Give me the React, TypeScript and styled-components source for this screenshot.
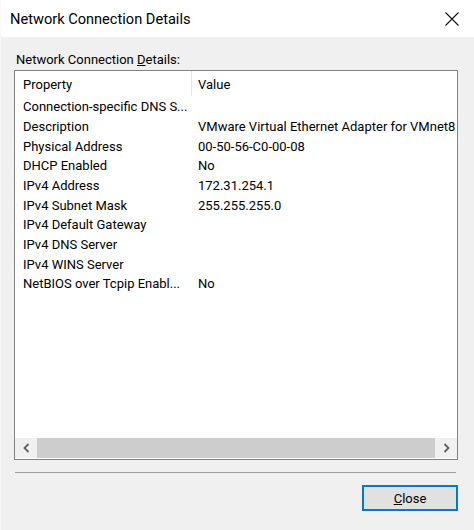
import React from "react";
import styled, { createGlobalStyle } from "styled-components";

const font = `Roboto, "Liberation Sans", Arial, sans-serif`;

const GlobalStyle = createGlobalStyle`
  html, body {
    margin: 0;
    padding: 0;
    background: #f0f0f0;
  }
  * {
    box-sizing: border-box;
  }
`;

const Window = styled.div`
  display: flex;
  flex-direction: column;
  width: 474px;
  height: 530px;
  overflow: hidden;

  font-family: ${font};
  font-size: 13px;
  color: #000;
  background: #f0f0f0;
  border-left: 1px solid #f8f8f8;
`;

const TitleBar = styled.div`
  display: flex;
  align-items: center;
  justify-content: space-between;
  flex: 0 0 37px;
  padding: 1px 15px 0 9px;

  background: #fff;
`;

const Title = styled.span`
  font-size: 14.6px;
  line-height: 20px;
`;

const Body = styled.div`
  display: flex;
  flex-direction: column;
  flex: 1;
  padding: 13px 16px 0 13px;
`;

const Label = styled.div`
  height: 20px;
  padding-left: 2px;
  line-height: 19px;
`;

const List = styled.div`
  display: flex;
  flex-direction: column;
  height: 390px;
  overflow: hidden;

  background: #fff;
  border: 1px solid #828282;
`;

const Header = styled.div`
  display: flex;
  flex: 0 0 25px;
`;

const HeaderCell = styled.div<{ $width?: number }>`
  display: flex;
  align-items: center;
  flex: ${(p) => (p.$width ? `0 0 ${p.$width}px` : "1")};
  padding: 2px 0 0 ${(p) => (p.$width ? 8 : 6)}px;

  border-right: ${(p) => (p.$width ? "1px solid #e5e5e5" : "none")};
`;

const Rows = styled.div`
  flex: 1;
  overflow: hidden;
`;

const Row = styled.div`
  display: flex;
  align-items: center;
  height: 19.67px;
  padding-top: 2px;
  white-space: nowrap;
`;

const PropCell = styled.div`
  flex: 0 0 177px;
  padding-left: 8px;
  overflow: hidden;
`;

const ValueCell = styled.div`
  flex: 1;
  padding-left: 6px;
  overflow: hidden;
`;

const ScrollBar = styled.div`
  display: flex;
  flex: 0 0 20px;
  margin-bottom: 1px;

  background: #f0f0f0;
`;

const ArrowBox = styled.div`
  display: flex;
  align-items: center;
  justify-content: center;
  flex: 0 0 22px;
`;

const Thumb = styled.div`
  flex: 1;
  background: #cdcdcd;
`;

const Separator = styled.div`
  height: 1px;
  margin: 12px 2px 0 1px;

  background: #a0a0a0;
`;

const ButtonRow = styled.div`
  display: flex;
  justify-content: flex-end;
  padding-top: 12px;
`;

const Button = styled.button`
  width: 96px;
  height: 26px;
  padding: 0;

  font-family: ${font};
  font-size: 13px;
  color: #000;

  background: #e1e1e1;
  border: 2px solid #0078d7;
`;

const rows: [string, string][] = [
  ["Connection-specific DNS S...", ""],
  ["Description", "VMware Virtual Ethernet Adapter for VMnet8"],
  ["Physical Address", "00-50-56-C0-00-08"],
  ["DHCP Enabled", "No"],
  ["IPv4 Address", "172.31.254.1"],
  ["IPv4 Subnet Mask", "255.255.255.0"],
  ["IPv4 Default Gateway", ""],
  ["IPv4 DNS Server", ""],
  ["IPv4 WINS Server", ""],
  ["NetBIOS over Tcpip Enabl...", "No"],
];

const Chevron = ({ dir }: { dir: "left" | "right" }) => (
  <svg width="7" height="10" viewBox="0 0 7 10">
    <path
      d={dir === "left" ? "M5.5 1 L1.5 5 L5.5 9" : "M1.5 1 L5.5 5 L1.5 9"}
      fill="none"
      stroke="#606060"
      strokeWidth="1.8"
    />
  </svg>
);

export default function App() {
  return (
    <Window>
      <GlobalStyle />
      <TitleBar>
        <Title>Network Connection Details</Title>
        <svg width="14" height="14" viewBox="0 0 14 14">
          <path d="M0.5 0.5 L13.5 13.5 M13.5 0.5 L0.5 13.5" stroke="#111" strokeWidth="1.1" />
        </svg>
      </TitleBar>
      <Body>
        <Label>
          Network Connection <u>D</u>etails:
        </Label>
        <List>
          <Header>
            <HeaderCell $width={177}>Property</HeaderCell>
            <HeaderCell>Value</HeaderCell>
          </Header>
          <Rows>
            {rows.map(([prop, value]) => (
              <Row key={prop}>
                <PropCell>{prop}</PropCell>
                <ValueCell>{value}</ValueCell>
              </Row>
            ))}
          </Rows>
          <ScrollBar>
            <ArrowBox>
              <Chevron dir="left" />
            </ArrowBox>
            <Thumb />
            <ArrowBox>
              <Chevron dir="right" />
            </ArrowBox>
          </ScrollBar>
        </List>
        <Separator />
        <ButtonRow>
          <Button>
            <u>C</u>lose
          </Button>
        </ButtonRow>
      </Body>
    </Window>
  );
}
